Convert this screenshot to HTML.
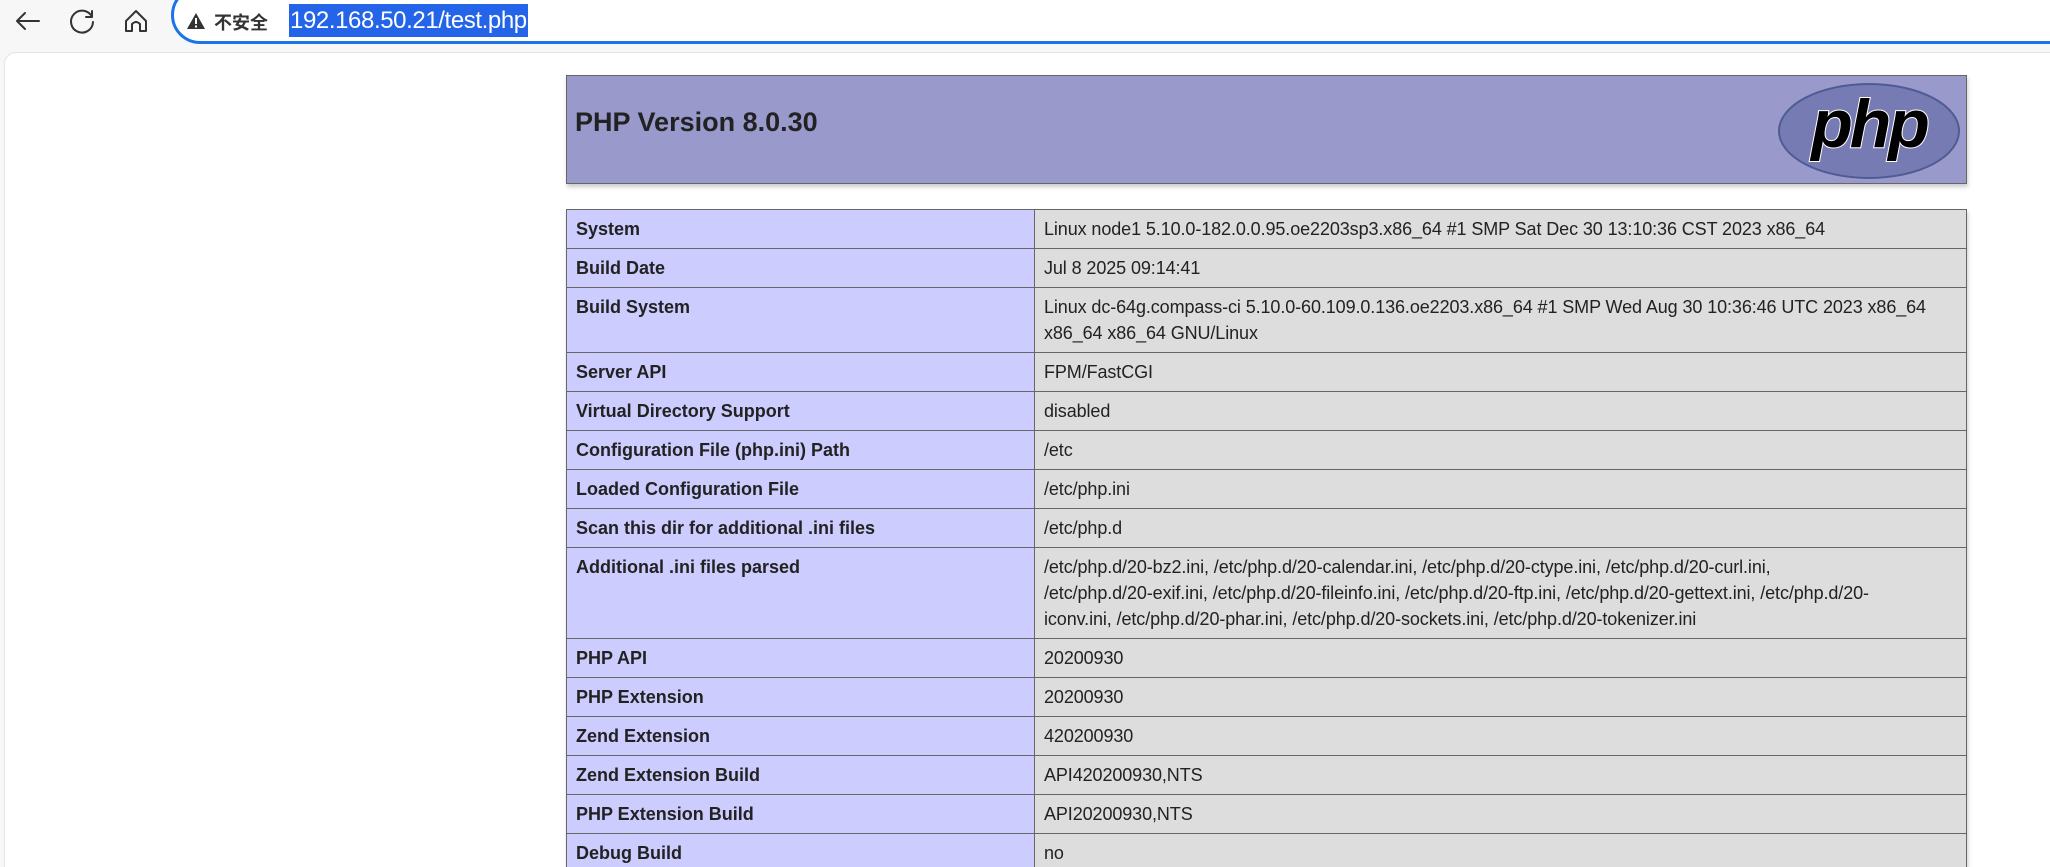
<!DOCTYPE html>
<html><head><meta charset="utf-8"><style>
*{box-sizing:border-box}
html,body{margin:0;padding:0;width:2050px;height:867px;overflow:hidden;background:#f7f7f7;font-family:"Liberation Sans","Noto Sans CJK SC",sans-serif}
#wrap{position:relative;width:2050px;height:867px;overflow:hidden}
.bar{position:absolute;left:171px;top:-14px;width:2000px;height:58px;border:3px solid #1a73e8;border-radius:30px;background:#fff}
.card{position:absolute;left:4px;top:52px;width:2060px;height:900px;background:#fff;border-radius:12px 0 0 0;border:1px solid #e4e4e4}
.hdr{position:absolute;left:566px;top:75px;width:1401px;height:109px;background:#99c;border:1px solid #666;box-shadow:1px 3px 4px #ccc}
.hdr h1{position:absolute;left:8px;top:31px;margin:0;font-size:27px;font-weight:bold;color:#222}
table{position:absolute;left:566px;top:209px;width:1401px;border-collapse:collapse;box-shadow:1px 3px 4px #ccc;color:#222;font-size:18px}
td{border:1px solid #666;padding:6px 9px 6px;line-height:26px;vertical-align:baseline;white-space:nowrap}
td.e{background:#ccf;font-weight:bold;width:468px}
td.v{background:#ddd;letter-spacing:-0.1px}
</style></head><body><div id="wrap">
<svg style="position:absolute;left:0;top:0" width="170" height="44">
<g fill="none" stroke="#333" stroke-width="2" stroke-linecap="round" stroke-linejoin="round">
<path d="M17 21H39M17 21L25 13M17 21L25 29"/>
<path d="M92 17A11 11 0 1 0 93 22M92 11V17H86"/>
<path d="M126 21L136 11L146 21V31H140V24Q136 20 132 24V31H126Z"/>
</g></svg>
<div class="bar"></div>
<svg style="position:absolute;left:186px;top:12px" width="20" height="18"><path d="M10 1L19 17H1Z" fill="#333"/><rect x="9" y="6" width="2" height="6" fill="#fff"/><rect x="9" y="13.5" width="2" height="2" fill="#fff"/></svg>
<div style="position:absolute;left:214px;top:9px;font-size:18px;font-weight:bold;color:#333">不安全</div>
<div style="position:absolute;left:289px;top:4px;height:33px;padding:0 1px;background:#2364e8;color:#fff;font-size:24px;line-height:33px;letter-spacing:-0.4px">192.168.50.21/test.php</div>
<div class="card"></div>
<div class="hdr"><h1>PHP Version 8.0.30</h1>
<svg style="position:absolute;left:1210px;top:5px" width="186" height="100"><ellipse cx="92" cy="50" rx="90" ry="47" fill="#777bb3" stroke="#4f5b93" stroke-width="2"/><text x="92" y="66" text-anchor="middle" font-family="Liberation Sans" font-weight="bold" font-style="italic" font-size="68" fill="#000" stroke="#fff" stroke-width="2" paint-order="stroke" letter-spacing="-3">php</text></svg>
</div>
<table>
<tr><td class="e">System</td><td class="v">Linux node1 5.10.0-182.0.0.95.oe2203sp3.x86_64 #1 SMP Sat Dec 30 13:10:36 CST 2023 x86_64</td></tr>
<tr><td class="e">Build Date</td><td class="v">Jul 8 2025 09:14:41</td></tr>
<tr><td class="e">Build System</td><td class="v">Linux dc-64g.compass-ci 5.10.0-60.109.0.136.oe2203.x86_64 #1 SMP Wed Aug 30 10:36:46 UTC 2023 x86_64<br>x86_64 x86_64 GNU/Linux</td></tr>
<tr><td class="e">Server API</td><td class="v">FPM/FastCGI</td></tr>
<tr><td class="e">Virtual Directory Support</td><td class="v">disabled</td></tr>
<tr><td class="e">Configuration File (php.ini) Path</td><td class="v">/etc</td></tr>
<tr><td class="e">Loaded Configuration File</td><td class="v">/etc/php.ini</td></tr>
<tr><td class="e">Scan this dir for additional .ini files</td><td class="v">/etc/php.d</td></tr>
<tr><td class="e">Additional .ini files parsed</td><td class="v">/etc/php.d/20-bz2.ini, /etc/php.d/20-calendar.ini, /etc/php.d/20-ctype.ini, /etc/php.d/20-curl.ini,<br>/etc/php.d/20-exif.ini, /etc/php.d/20-fileinfo.ini, /etc/php.d/20-ftp.ini, /etc/php.d/20-gettext.ini, /etc/php.d/20-<br>iconv.ini, /etc/php.d/20-phar.ini, /etc/php.d/20-sockets.ini, /etc/php.d/20-tokenizer.ini</td></tr>
<tr><td class="e">PHP API</td><td class="v">20200930</td></tr>
<tr><td class="e">PHP Extension</td><td class="v">20200930</td></tr>
<tr><td class="e">Zend Extension</td><td class="v">420200930</td></tr>
<tr><td class="e">Zend Extension Build</td><td class="v">API420200930,NTS</td></tr>
<tr><td class="e">PHP Extension Build</td><td class="v">API20200930,NTS</td></tr>
<tr><td class="e">Debug Build</td><td class="v">no</td></tr>
</table>
</div></body></html>
